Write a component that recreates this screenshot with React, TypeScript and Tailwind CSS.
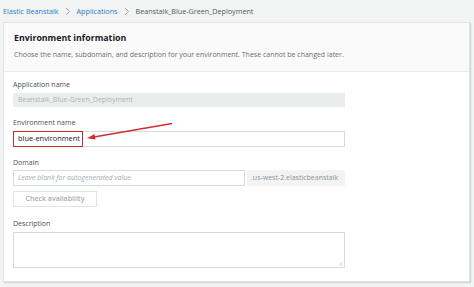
import React from "react";

const font = { fontFamily: '"Open Sans", "Noto Sans", Arial, sans-serif' };

function Chevron() {
  return (
    <svg width="6" height="9" viewBox="0 0 6 9" className="mx-[6px]">
      <path d="M1 1l3.5 3.5L1 8" fill="none" stroke="#9aa1a6" strokeWidth="0.9" />
    </svg>
  );
}

export default function App() {
  return (
    <div style={font} className="relative w-[474px] h-[287px] overflow-hidden bg-[#f2f3f3] text-[#545b64] whitespace-nowrap">
      {/* Breadcrumbs */}
      <div className="h-[22px] flex items-center pl-[3px] text-[7.2px] pt-[1px]">
        <span className="text-[#2e7fbf]">Elastic Beanstalk</span>
        <Chevron />
        <span className="text-[#2e7fbf]">Applications</span>
        <Chevron />
        <span className="text-[#545b64]">Beanstalk_Blue-Green_Deployment</span>
      </div>

      {/* Card */}
      <div className="ml-[3px] w-[467px] h-[260px] bg-white border border-[#e2e4e4] shadow-[1px_1px_1px_rgba(0,0,0,0.12)]">
        <div className="h-[49px] bg-[#fafafa] border-b border-[#eaeded] pl-[10px] pt-[9px]">
          <div className="text-[8.8px] font-bold text-[#16191f] leading-[12px]">Environment information</div>
          <div className="text-[7px] leading-[10px] mt-[6px] text-[#687078]">
            Choose the name, subdomain, and description for your environment. These cannot be changed later.
          </div>
        </div>

        <div className="pl-[9px] pt-[8px] text-[7px]">
          <div className="leading-[10px] text-[#4b5158]">Application name</div>
          <div className="mt-[3px] w-[332px] h-[14px] bg-[#eaeded] flex items-center pl-[5px] text-[#aab7b8]">
            Beanstalk_Blue-Green_Deployment
          </div>

          <div className="mt-[11px] leading-[10px] text-[#4b5158]">Environment name</div>
          <div className="mt-[3px] w-[332px] h-[16px] border border-[#d5dbdb] relative">
            <div className="absolute left-[-1px] top-[-1px] w-[70px] h-[16px] border-[1.5px] border-[#cc2b2b] flex items-center pl-[4px] text-[#16191f] text-[7.4px]">
              blue-environment
            </div>
          </div>

          <div className="mt-[11px] leading-[10px] text-[#4b5158]">Domain</div>
          <div className="mt-[2px] flex">
            <div className="w-[232px] h-[16px] border border-[#d5dbdb] flex items-center pl-[4px] italic text-[#a4adb1]">
              Leave blank for autogenerated value
            </div>
            <div className="ml-[2px] w-[98px] h-[16px] bg-[#f2f3f3] flex items-center pl-[4px] text-[#8d9699]">
              .us-west-2.elasticbeanstalk
            </div>
          </div>
          <div className="mt-[5px] w-[84px] h-[16px] border border-[#e1e4e4] flex items-center justify-center font-semibold text-[#a4adb1]">
            Check availability
          </div>

          <div className="mt-[12px] leading-[10px] text-[#4b5158]">Description</div>
          <div className="mt-[3px] w-[332px] h-[36px] border border-[#d5dbdb] relative">
            <svg width="5" height="5" viewBox="0 0 5 5" className="absolute right-[1px] bottom-[1px]">
              <path d="M4.5 1L1 4.5M4.5 3L3 4.5" stroke="#aab7b8" strokeWidth="0.6" />
            </svg>
          </div>
        </div>
      </div>

      {/* Annotation arrow */}
      <svg className="absolute left-0 top-0" width="474" height="287" viewBox="0 0 474 287">
        <path d="M172 123.5L94 137" stroke="#d12f2f" strokeWidth="1.3" fill="none" />
        <path d="M87 138.3l7.5-4.3l1 5.4z" fill="#d12f2f" />
      </svg>
    </div>
  );
}
